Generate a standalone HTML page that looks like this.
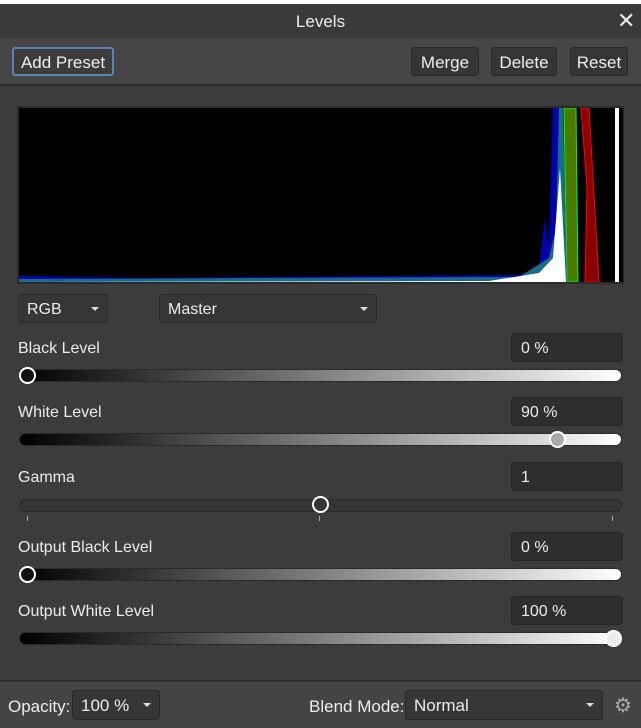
<!DOCTYPE html>
<html><head><style>
body{margin:0;width:641px;height:728px;background:#3c3c3c;font-family:"Liberation Sans",sans-serif;color:#ececec;position:relative;overflow:hidden;font-size:16px}
.a{position:absolute}
.btn{position:absolute;top:47px;height:29px;background:#353535;border:1px solid #2a2a2a;border-radius:3px;box-sizing:border-box;font-size:17px;line-height:29px;text-align:center;color:#eee}
.dd{position:absolute;background:#363636;border:1px solid #2a2a2a;border-radius:3px;box-sizing:border-box;line-height:29px;padding-left:8px}
.dd:after{content:"";position:absolute;right:8px;top:12px;border-left:4px solid transparent;border-right:4px solid transparent;border-top:4px solid #ddd}
.tb{position:absolute;left:511px;width:112px;height:29px;background:#2e2e2e;border:1px solid #262626;border-radius:3px;box-sizing:border-box;line-height:29px;padding-left:9px}
.lb{position:absolute;left:18px}
.tr{position:absolute;left:19px;width:603px;height:13px;border-radius:7px;background:linear-gradient(90deg,#000,#fff);border:1px solid #2a2a2a;box-sizing:border-box}
.k{position:absolute;width:17px;height:17px;border-radius:50%;border:2px solid #fff;background:#111;box-sizing:border-box}
</style></head><body>
<div class="a" style="left:0;top:0;width:641px;height:4px;background:#fff"></div>
<div class="a" style="left:0;top:4px;width:641px;height:34px;background:#3a3a3a"></div>
<div class="a" style="left:0;top:12px;width:641px;text-align:center;font-size:17px">Levels</div>
<div class="a" style="left:617px;top:9px;font-size:22px;line-height:24px">✕</div>
<div class="a" style="left:0;top:38px;width:641px;height:46px;background:#464646"></div>
<div class="a" style="left:0;top:84px;width:641px;height:2px;background:#2c2c2c"></div>
<div class="btn" style="left:12px;width:102px;border:2px solid #5b82b4;background:#3c3c3c;line-height:27px">Add Preset</div>
<div class="btn" style="left:411px;width:68px">Merge</div>
<div class="btn" style="left:491px;width:66px">Delete</div>
<div class="btn" style="left:570px;width:58px">Reset</div>
<div class="a" style="left:17px;top:106px;width:607px;height:178px;background:#2b2b2b"></div>
<svg class="a" style="left:19px;top:108px" width="604" height="174" viewBox="0 0 604 174">
<rect width="604" height="174" fill="#000"/>
<path d="M0 168 L120 170 L500 167 L520 160 L526 110 L530 140 L534 0 L543 0 L542 174 L0 174Z" fill="#0000b0"/>
<path d="M545 0 L557 0 L559 174 L548 174Z" fill="#4a7a00" stroke="#0f0"/>
<path d="M562 0 L570 0 L580 174 L566 174 L568 80Z" fill="#800" stroke="#f00"/>
<path d="M0 171 L500 169 L530 150 L537 120 L540 0 L544 0 L548 174 L0 174Z" fill="#1a6a8a"/>
<path d="M0 174 L470 173 L520 165 L534 150 L541 60 L547 174Z" fill="#fff"/>
<rect x="596" y="0" width="4" height="174" fill="#fff"/>
</svg>
<div class="dd" style="left:18px;top:294px;width:90px;height:29px">RGB</div>
<div class="dd" style="left:159px;top:294px;width:218px;height:29px">Master</div>
<div class="lb" style="top:340px">Black Level</div><div class="tb" style="top:333px">0 %</div>
<div class="tr" style="top:369px"></div><div class="k" style="left:19px;top:367px"></div>
<div class="lb" style="top:404px">White Level</div><div class="tb" style="top:397px">90 %</div>
<div class="tr" style="top:433px;background:linear-gradient(90deg,#000,#ddd 88%,#fff)"></div><div class="k" style="left:549px;top:431px;background:#aaa"></div>
<div class="lb" style="top:469px">Gamma</div><div class="tb" style="top:462px">1</div>
<div class="tr" style="top:499px;background:#353535;border-color:#2a2a2a"></div><div class="k" style="left:312px;top:496px;background:#353535"></div>
<div class="a" style="left:27px;top:516px;width:1px;height:5px;background:#aaa"></div>
<div class="a" style="left:319px;top:516px;width:1px;height:5px;background:#aaa"></div>
<div class="a" style="left:612px;top:516px;width:1px;height:5px;background:#aaa"></div>
<div class="lb" style="top:539px">Output Black Level</div><div class="tb" style="top:532px">0 %</div>
<div class="tr" style="top:568px"></div><div class="k" style="left:19px;top:566px"></div>
<div class="lb" style="top:603px">Output White Level</div><div class="tb" style="top:596px">100 %</div>
<div class="tr" style="top:632px"></div><div class="k" style="left:605px;top:630px;background:#eee"></div>
<div class="a" style="left:0;top:680px;width:641px;height:2px;background:#2c2c2c"></div>
<div class="a" style="left:0;top:682px;width:641px;height:46px;background:#444"></div>
<div class="a" style="left:8px;top:697px;font-size:17px">Opacity:</div>
<div class="dd" style="left:72px;top:690px;width:88px;height:30px;line-height:30px;font-size:17px">100 %</div>
<div class="a" style="left:309px;top:697px;font-size:17px">Blend Mode:</div>
<div class="dd" style="left:405px;top:690px;width:198px;height:30px;line-height:30px;font-size:17px">Normal</div>
<div class="a" style="left:614px;top:693px;font-size:20px;color:#aaa">⚙</div>
</body></html>
